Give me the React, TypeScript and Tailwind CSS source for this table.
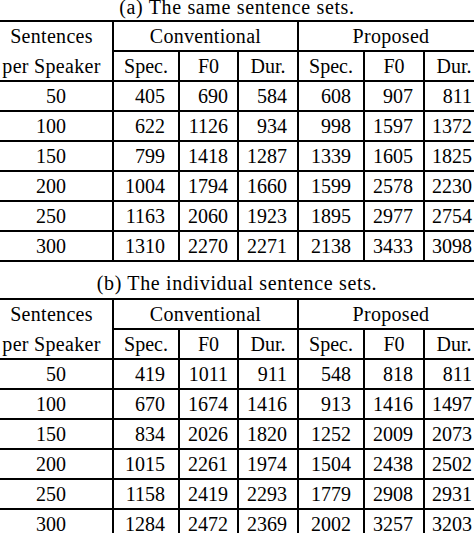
const tableA = [
  ['50', '405', '690', '584', '608', '907', '811'],
  ['100', '622', '1126', '934', '998', '1597', '1372'],
  ['150', '799', '1418', '1287', '1339', '1605', '1825'],
  ['200', '1004', '1794', '1660', '1599', '2578', '2230'],
  ['250', '1163', '2060', '1923', '1895', '2977', '2754'],
  ['300', '1310', '2270', '2271', '2138', '3433', '3098'],
]

const tableB = [
  ['50', '419', '1011', '911', '548', '818', '811'],
  ['100', '670', '1674', '1416', '913', '1416', '1497'],
  ['150', '834', '2026', '1820', '1252', '2009', '2073'],
  ['200', '1015', '2261', '1974', '1504', '2438', '2502'],
  ['250', '1158', '2419', '2293', '1779', '2908', '2931'],
  ['300', '1284', '2472', '2369', '2002', '3257', '3203'],
]

// right padding per column, so the numbers line up as in the print
const pad = ['pr-[46px]', 'pr-[13px]', 'pr-[9px]', 'pr-[10px]', 'pr-[12px]', 'pr-[10px]', 'pr-[11px]']

function ResultTable({ rows }: { rows: string[][] }) {
  return (
    <div className="grid grid-cols-[121px_64px_57px_58px_64px_58px_58px] auto-rows-[28px] gap-[2px] p-[2px] bg-black">
      <div className="row-span-2 bg-white flex flex-col gap-[2px] items-center tracking-[0.3px]">
        <span className="leading-[28px] whitespace-nowrap">Sentences</span>
        <span className="leading-[28px] whitespace-nowrap">per Speaker</span>
      </div>
      <div className="col-span-3 bg-white text-center leading-[28px] tracking-[0.3px]">Conventional</div>
      <div className="col-span-3 bg-white text-center leading-[28px] tracking-[0.3px]">Proposed</div>
      {['Spec.', 'F0', 'Dur.', 'Spec.', 'F0', 'Dur.'].map((h, i) => (
        <div key={i} className="bg-white text-center leading-[28px] whitespace-nowrap">{h}</div>
      ))}
      {rows.map(row =>
        row.map((v, i) => (
          <div key={row[0] + '-' + i} className={`bg-white text-right leading-[28px] whitespace-nowrap ${pad[i]}`}>
            {v}
          </div>
        ))
      )}
    </div>
  )
}

export default function App() {
  return (
    <main className="w-[474px] h-[533px] overflow-hidden bg-white text-black text-[20px] font-['Liberation_Serif',serif]">
      <div className="w-[496px] ml-[-11px]">
        <p className="mt-[-3px] mb-[3px] h-[20px] leading-[20px] text-center whitespace-nowrap tracking-[0.65px]">
          (a) The same sentence sets.
        </p>
        <ResultTable rows={tableA} />
        <p className="mt-[11px] mb-[5px] h-[20px] leading-[20px] text-center whitespace-nowrap tracking-[0.65px]">
          (b) The individual sentence sets.
        </p>
        <ResultTable rows={tableB} />
      </div>
    </main>
  )
}
